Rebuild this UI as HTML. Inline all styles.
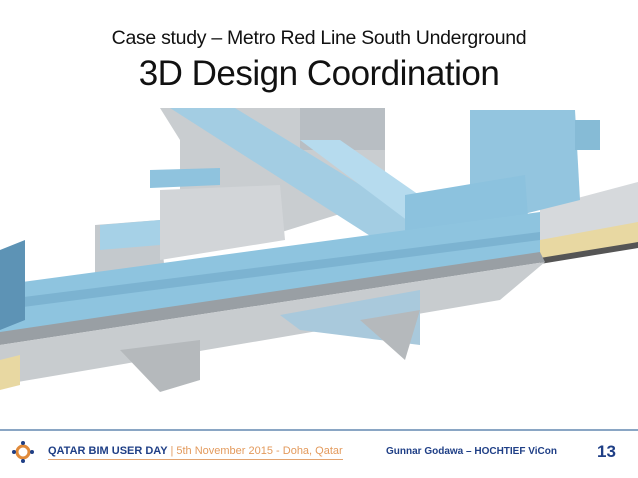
<!DOCTYPE html>
<html><head><meta charset="utf-8"><style>
body{margin:0;width:638px;height:478px;background:#fff;position:relative;overflow:hidden;font-family:"Liberation Sans",sans-serif}
.t1{position:absolute;top:27px;left:0;width:638px;text-align:center;font-size:19.5px;color:#111;letter-spacing:-0.3px}
.t2{position:absolute;top:54px;left:0;width:638px;text-align:center;font-size:35px;color:#111;letter-spacing:-0.5px}
.line{position:absolute;top:429px;left:0;width:638px;height:2px;background:#8aa6c4}
.f1{position:absolute;top:445px;left:48px;font-size:11px;font-weight:bold;color:#1f3f86;white-space:nowrap;border-bottom:1.5px solid #e3a470;padding-bottom:2px}
.f1 span{font-weight:normal;color:#e39a5c}
.f2{position:absolute;top:446px;left:386px;font-size:10px;font-weight:bold;color:#1f3f86;white-space:nowrap}
.f3{position:absolute;top:442px;left:597px;font-size:17px;font-weight:bold;color:#1f3f86}
</style></head><body>
<div class="t1">Case study – Metro Red Line South Underground</div>
<div class="t2">3D Design Coordination</div>
<svg style="position:absolute;left:0;top:0" width="638" height="478">
<polygon points="540,208 638,182 638,228 540,248" fill="#d6d9dc"/>
<polygon points="540,240 638,222 638,246 540,262" fill="#e8d8a2"/>
<polygon points="540,258 638,242 638,248 540,264" fill="#555"/>
<polygon points="160,108 385,108 385,200 240,245 180,255 180,140" fill="#c9cdd0"/>
<polygon points="300,108 385,108 385,150 300,150" fill="#b8bec3"/>
<polygon points="170,108 235,108 450,240 400,255" fill="#a3cde3"/>
<polygon points="300,140 340,140 455,220 420,230" fill="#b6dbee"/>
<polygon points="470,110 575,110 580,200 520,215 470,215" fill="#93c5df"/>
<polygon points="405,195 525,175 530,245 405,265" fill="#8cc2de"/>
<polygon points="575,120 600,120 600,150 575,150" fill="#86bbd6"/>
<polygon points="95,225 160,220 165,275 95,285" fill="#c4c9cd"/>
<polygon points="100,225 160,220 160,245 100,250" fill="#a6d1e7"/>
<polygon points="160,190 280,185 285,240 160,260" fill="#d2d5d8"/>
<polygon points="150,170 220,168 220,185 150,188" fill="#8fc3de"/>
<polygon points="0,285 540,212 540,255 0,335" fill="#8ec4df"/>
<polygon points="0,300 540,232 540,240 0,310" fill="#6fa9c8" opacity="0.6"/>
<polygon points="0,332 540,252 545,262 0,345" fill="#999fa4"/>
<polygon points="0,345 545,262 500,300 0,385" fill="#c8cccf"/>
<polygon points="280,315 420,290 420,345 300,330" fill="#a9c9dc"/>
<polygon points="360,320 420,310 405,360" fill="#b5b9bc"/>
<polygon points="120,350 200,340 200,380 160,392" fill="#b5b9bc"/>
<polygon points="0,250 25,240 25,320 0,330" fill="#5d93b5"/>
<polygon points="0,360 20,355 20,385 0,390" fill="#e8d8a2"/>
<g transform="translate(23,452)">
<circle r="6" fill="none" stroke="#e08a3a" stroke-width="3"/>
<circle cx="0" cy="-9" r="2" fill="#1f3f86"/><circle cx="0" cy="9" r="2" fill="#1f3f86"/>
<circle cx="-9" cy="0" r="2" fill="#1f3f86"/><circle cx="9" cy="0" r="2" fill="#1f3f86"/>
</g>
</svg>
<div class="line"></div>
<div class="f1">QATAR BIM USER DAY <span>| 5th November 2015 - Doha, Qatar</span></div>
<div class="f2">Gunnar Godawa – HOCHTIEF ViCon</div>
<div class="f3">13</div>
</body></html>
